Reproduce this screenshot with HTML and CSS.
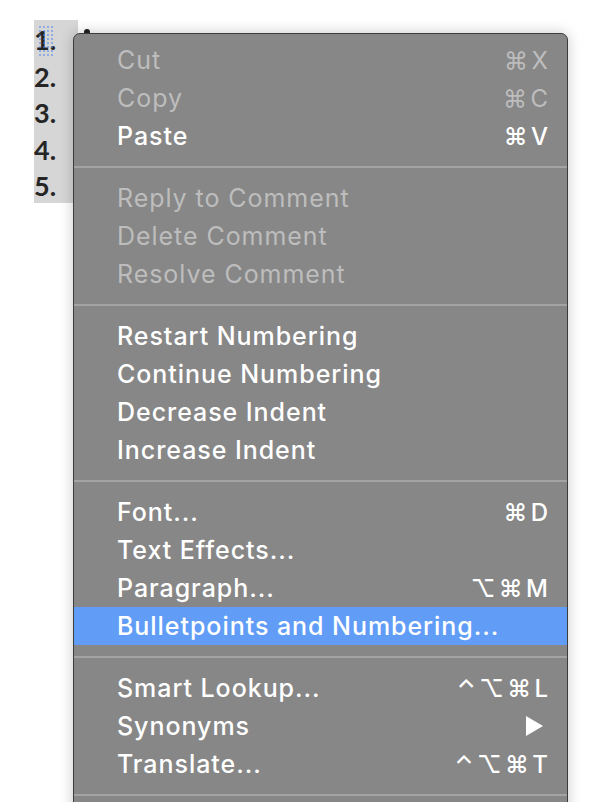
FILE: index.html
```html
<!DOCTYPE html>
<html>
<head>
<meta charset="utf-8">
<link rel="stylesheet" href="styles.css">
</head>
<body>
<div class="page">
  <div class="numlist">
    <div class="num">1.</div>
    <div class="num">2.</div>
    <div class="num">3.</div>
    <div class="num">4.</div>
    <div class="num">5.</div>
  </div>
  <span class="sel-dots"></span>
  <span class="caret-dot"></span>
  <div class="menu">
    <div class="group">
      <div class="item disabled"><span class="label">Cut</span><span class="key">⌘X</span></div>
      <div class="item disabled"><span class="label">Copy</span><span class="key">⌘C</span></div>
      <div class="item"><span class="label">Paste</span><span class="key">⌘V</span></div>
    </div>
    <div class="sep"></div>
    <div class="group">
      <div class="item disabled"><span class="label">Reply to Comment</span></div>
      <div class="item disabled"><span class="label">Delete Comment</span></div>
      <div class="item disabled"><span class="label">Resolve Comment</span></div>
    </div>
    <div class="sep"></div>
    <div class="group">
      <div class="item"><span class="label">Restart Numbering</span></div>
      <div class="item"><span class="label">Continue Numbering</span></div>
      <div class="item"><span class="label">Decrease Indent</span></div>
      <div class="item"><span class="label">Increase Indent</span></div>
    </div>
    <div class="sep"></div>
    <div class="group">
      <div class="item"><span class="label">Font...</span><span class="key">⌘D</span></div>
      <div class="item"><span class="label">Text Effects...</span></div>
      <div class="item"><span class="label">Paragraph...</span><span class="key">⌥⌘M</span></div>
      <div class="item active"><span class="label">Bulletpoints and Numbering...</span></div>
    </div>
    <div class="sep"></div>
    <div class="group">
      <div class="item"><span class="label">Smart Lookup...</span><span class="key">⌃⌥⌘L</span></div>
      <div class="item"><span class="label">Synonyms</span><svg class="arrow" width="17" height="20" viewBox="0 0 17 20"><path d="M0 0 L17 10 L0 20 Z" fill="#ffffff"/></svg></div>
      <div class="item"><span class="label">Translate...</span><span class="key">⌃⌥⌘T</span></div>
    </div>
    <div class="sep"></div>
    <div class="group">
      <div class="item"><span class="label">&nbsp;</span></div>
    </div>
  </div>
</div>
</body>
</html>
```

FILE: styles.css
```css
html, body {
  margin: 0;
  padding: 0;
  background: #ffffff;
  overflow: hidden;
}

.page {
  position: relative;
  width: 602px;
  height: 802px;
  overflow: hidden;
}

.numlist {
  margin-left: 34px;
  padding-top: 2px;
  margin-top: 20px;
  width: 44px;
  height: 181px;
  background: #d6d6d6;
  font-family: "Lato", "Liberation Sans", sans-serif;
  font-size: 27px;
  font-weight: 700;
  color: #252525;
}

.num {
  height: 36.6px;
  line-height: 36.6px;
}

.sel-dots {
  position: absolute;
  left: 38px;
  top: 25px;
  width: 17px;
  height: 32px;
  background-image: radial-gradient(circle, rgba(70, 130, 240, 0.5) 0.7px, transparent 1.1px);
  background-size: 4px 4px;
}

.caret-dot {
  position: absolute;
  left: 84px;
  top: 29px;
  width: 6px;
  height: 6px;
  border-radius: 50%;
  background: #222;
}

.menu {
  position: absolute;
  left: 73px;
  top: 33px;
  width: 493px;
  height: 820px;
  background: #878787;
  border: 1px solid #3c3c3c;
  border-radius: 7px;
  padding-top: 7px;
  box-shadow: 0 0 14px rgba(0, 0, 0, 0.22);
  font-family: "Inter", "DejaVu Sans", sans-serif;
  font-size: 24px;
  font-weight: 500;
  color: #ffffff;
}

.item {
  height: 38px;
  display: flex;
  align-items: center;
  justify-content: space-between;
  padding-left: 43px;
  padding-right: 19px;
}

.label {
  font-size: 25px;
  letter-spacing: 0.95px;
}

.item.disabled {
  color: #bdbdbd;
  font-weight: 400;
}

.item.active {
  background: #619df6;
}

.key {
  letter-spacing: 3.5px;
  margin-right: -3.5px;
}

.sep {
  height: 2px;
  margin: 11px 0;
  background: #a3a3a3;
}

.arrow {
  display: block;
  margin-right: 5px;
}
```
